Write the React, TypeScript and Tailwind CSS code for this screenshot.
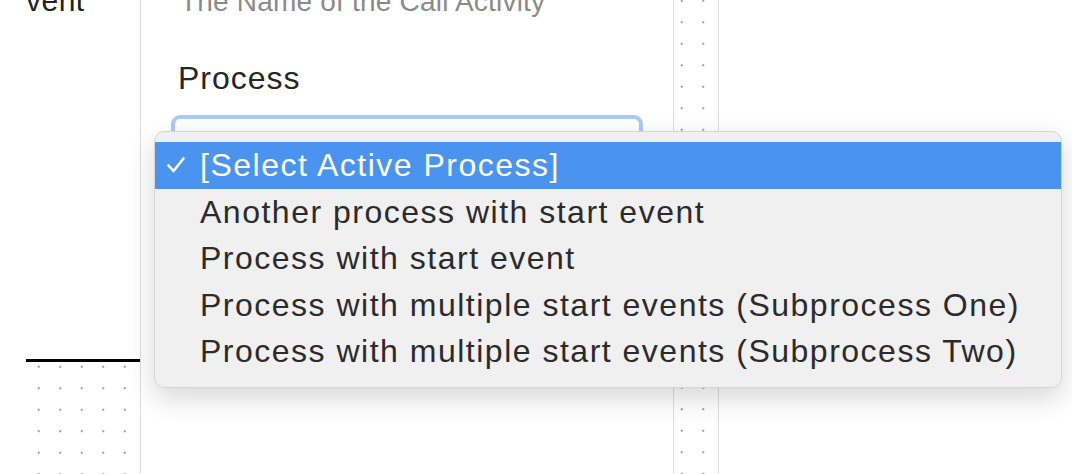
import React from 'react';

// Options of the native select popup
const OPTIONS = [
  '[Select Active Process]',
  'Another process with start event',
  'Process with start event',
  'Process with multiple start events (Subprocess One)',
  'Process with multiple start events (Subprocess Two)',
];

const dots =
  'bg-[radial-gradient(circle,#9a9a9a_0.9px,transparent_1.2px)] bg-[size:21.5px_21.5px]';

export default function App() {
  return (
    <div
      className="relative h-[474px] w-[1072px] overflow-hidden bg-white"
      style={{ fontFamily: '"Liberation Sans", Arial, sans-serif' }}
    >
      <div className="flex h-full">
        {/* Canvas column on the left */}
        <div className="flex w-[140px] flex-col pl-[26px]">
          <div className="h-[362px] border-b-[3px] border-black">
            <div className="-mt-[16px] text-[30px] leading-[34px] tracking-[0.5px] text-[#222]">vent</div>
          </div>
          <div className={`flex-1 ${dots} bg-[position:2px_-6px]`} />
        </div>

        {/* Properties panel */}
        <div className="w-[534px] border-x border-[#dcdcdc] pl-[37px] pr-[30px]">
          <div className="-mt-[14px] pl-[2px] text-[28px] leading-[32px] tracking-[0.2px] text-[#8a8a8a]">
            The Name of the Call Activity
          </div>
          <div className="mt-[41px] text-[32px] leading-[38px] tracking-[1px] text-[#262626]">Process</div>
          <div className="-ml-[7px] mt-[18px] h-[40px] w-[472px] rounded-[9px] border-[4px] border-[#a9cbf6] bg-white" />
        </div>

        {/* Dotted strip */}
        <div className={`w-[45px] border-r border-[#dcdcdc] ${dots} bg-[position:-3px_-10px]`} />

        <div className="flex-1" />
      </div>

      {/* Native select popup */}
      <div className="absolute left-[154px] top-[131px] w-[908px] rounded-[10px] border border-[#d6d6d6] bg-[#f0f0f0] pt-[10px] pb-[12px] shadow-[0_10px_28px_rgba(0,0,0,0.16)]">
        {OPTIONS.map((opt, i) => (
          <div
            key={opt}
            className={`flex h-[46.5px] items-center text-[32px] tracking-[1.5px] ${
              i === 0 ? 'bg-[#4a94f0] text-white' : 'text-[#2b2b2b]'
            }`}
          >
            <div className="flex w-[42px] justify-center">
              {i === 0 && (
                <svg width="20" height="18" viewBox="0 0 20 18" fill="none">
                  <path
                    d="M2.5 9.5 L7.5 15 L17.5 2.5"
                    stroke="white"
                    strokeWidth="2.6"
                    strokeLinecap="round"
                    strokeLinejoin="round"
                  />
                </svg>
              )}
            </div>
            <span className="pl-[3px]">{opt}</span>
          </div>
        ))}
      </div>
    </div>
  );
}
